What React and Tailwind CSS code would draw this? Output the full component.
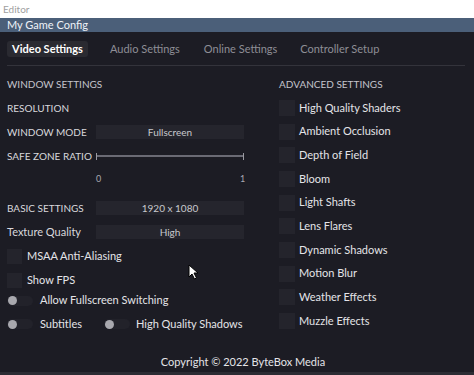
import React from "react";

const leftFont = { fontFamily: "Lato, 'Open Sans', sans-serif" };

const tabs = ["Video Settings", "Audio Settings", "Online Settings", "Controller Setup"];

const advanced = [
  "High Quality Shaders",
  "Ambient Occlusion",
  "Depth of Field",
  "Bloom",
  "Light Shafts",
  "Lens Flares",
  "Dynamic Shadows",
  "Motion Blur",
  "Weather Effects",
  "Muzzle Effects",
];

const Combo = ({ value }) => (
  <div className="w-[148px] h-[14px] bg-[#25252d] flex items-center justify-center text-[10px] text-[#c8c8cc]">
    {value}
  </div>
);

const Check = ({ label }) => (
  <div className="flex items-center h-[24px]">
    <div className="w-[15px] h-[15px] bg-[#24242c]" />
    <span className="ml-[5px] text-[11px] text-[#e4e4e8]">{label}</span>
  </div>
);

const Toggle = () => (
  <div className="w-[26px] h-[10px] bg-[#22222a] rounded-full flex items-center">
    <div className="w-[9px] h-[9px] rounded-full bg-[#a8a8ae] ml-[1px]" />
  </div>
);

const Row = ({ label, children, upper }) => (
  <div className="flex items-center h-[24px]">
    <span className={upper ? "w-[89px] text-[10px] text-[#d8d8dc]" : "w-[89px] text-[11px] text-[#d8d8dc]"}>
      {label}
    </span>
    {children}
  </div>
);

export default function App() {
  return (
    <div className="w-[474px] h-[375px] bg-white flex flex-col relative" style={leftFont}>
      <div className="h-[18px] flex items-center px-[3px] text-[10px] text-[#a0a0a0]">Editor</div>
      <div className="h-[14px] bg-[#4b5f79] flex items-center px-[7px] text-[11px] text-[#eef2f8]">My Game Config</div>
      <div className="flex-1 bg-[#1c1c24] flex flex-col px-[7px] border-b-[3px] border-[#2c2c34]">
        <div className="flex items-center mt-[9px] h-[16px]">
          {tabs.map((t, i) => (
            <div
              key={t}
              className={
                i === 0
                  ? "h-[16px] w-[81px] rounded-[3px] bg-[#2a2a31] flex items-center justify-center text-[11px] font-bold text-white"
                  : "h-[16px] flex items-center text-[11px] text-[#8e8e96]"
              }
              style={i === 1 ? { marginLeft: 22 } : i === 2 ? { marginLeft: 24 } : i === 3 ? { marginLeft: 23 } : undefined}
            >
              {t}
            </div>
          ))}
        </div>
        <div className="h-px bg-[#33333b] mt-[8px] mr-[2px]" />
        <div className="flex mt-[6px]">
          <div className="w-[272px] flex flex-col">
            <div className="h-[24px] flex items-center text-[10px] text-[#c4c4cc]">WINDOW SETTINGS</div>
            <Row label="RESOLUTION" upper />
            <Row label="WINDOW MODE" upper>
              <Combo value="Fullscreen" />
            </Row>
            <Row label="SAFE ZONE RATIO" upper>
              <div className="w-[148px] h-[7px] flex items-center">
                <div className="w-px h-[7px] bg-[#9a9aa2]" />
                <div className="flex-1 h-[2px] bg-[#6a6a74]" />
                <div className="w-px h-[7px] bg-[#9a9aa2]" />
              </div>
            </Row>
            <div className="h-[22px] flex items-center pl-[89px] text-[9px] text-[#a8a8b0]">
              <span className="w-[144px]">0</span>
              <span>1</span>
            </div>
            <div className="h-[6px]" />
            <Row label="BASIC SETTINGS" upper>
              <Combo value="1920 x 1080" />
            </Row>
            <Row label="Texture Quality">
              <Combo value="High" />
            </Row>
            <Check label="MSAA Anti-Aliasing" />
            <Check label="Show FPS" />
            <div className="flex items-center h-[21px] mt-[-2px]">
              <Toggle />
              <span className="ml-[7px] text-[11px] text-[#e4e4e8]">Allow Fullscreen Switching</span>
            </div>
            <div className="flex items-center h-[24px] mt-[1px]">
              <Toggle />
              <span className="ml-[7px] text-[11px] text-[#e4e4e8]">Subtitles</span>
              <div className="ml-[22px]">
                <Toggle />
              </div>
              <span className="ml-[6px] text-[11px] text-[#e4e4e8]">High Quality Shadows</span>
            </div>
          </div>
          <div className="flex flex-col">
            <div className="h-[24px] flex items-center text-[10px] text-[#c4c4cc]">ADVANCED SETTINGS</div>
            {advanced.map((a) => (
              <div key={a} className="flex items-center h-[23.7px]">
                <div className="w-[16px] h-[16px] bg-[#24242c]" />
                <span className="ml-[4px] text-[11px] text-[#e4e4e8]">{a}</span>
              </div>
            ))}
          </div>
        </div>
        <div className="flex-1 flex items-end justify-center pb-[2px] pl-[12px] text-[11px] text-[#e4e4e8]">
          Copyright © 2022 ByteBox Media
        </div>
      </div>
      <svg className="absolute left-[188px] top-[264px]" width="11" height="16" viewBox="0 0 11 16">
        <path d="M1 1 L1 13 L4 10 L6.5 15 L8.5 14 L6 9 L10 9 Z" fill="white" stroke="black" strokeWidth="1" />
      </svg>
    </div>
  );
}
